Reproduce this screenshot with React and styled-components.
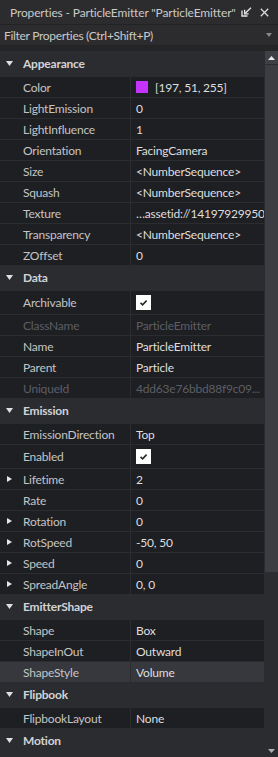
import React from "react";
import styled, { createGlobalStyle } from "styled-components";

const Global = createGlobalStyle`
  html, body { margin: 0; padding: 0; background: #2b2c30; }
  body { font-family: "Lato", "Open Sans", sans-serif; }
`;

const Panel = styled.div`
  width: 278px;
  height: 757px;
  overflow: hidden;
  display: flex;
  flex-direction: column;
  background: #2b2c30;
  font-family: "Lato", "Open Sans", sans-serif;
  font-size: 12px;
  letter-spacing: -0.2px;
`;

const TitleBar = styled.div`
  height: 24px;
  flex: none;
  display: flex;
  align-items: center;
  padding: 0 9px 0 10px;
  background: #2c2c2e;
  color: #c9c9c9;
  box-sizing: border-box;
  letter-spacing: -0.15px;
`;

const TitleText = styled.span`
  flex: 1;
  white-space: nowrap;
`;

const TitleIcons = styled.div`
  display: flex;
  align-items: center;
  gap: 8px;
`;

const FilterBar = styled.div`
  height: 20px;
  flex: none;
  display: flex;
  align-items: center;
  justify-content: space-between;
  padding: 0 6px 0 4px;
  background: #2c2c2e;
  border-top: 1px solid #232325;
  border-bottom: 1px solid #232325;
  color: #c9c9c9;
  letter-spacing: -0.3px;
`;

const Gap = styled.div`
  height: 5px;
  flex: none;
  background: #252527;
`;

const Body = styled.div`
  flex: 1;
  display: flex;
  min-height: 0;
`;

const List = styled.div`
  flex: 1;
  display: flex;
  flex-direction: column;
  background: #2b2c30;
`;

const Header = styled.div`
  height: 25px;
  flex: none;
  display: flex;
  align-items: center;
  padding-left: 6px;
  gap: 10px;
  color: #d2d3d6;
  font-weight: 700;
  background: #2b2c30;
`;

const Row = styled.div`
  flex: none;
  display: grid;
  grid-template-columns: 130px 1fr;
  column-gap: 1px;
  margin-top: 1px;
  height: ${(p) => (p.$tall ? 23 : 20)}px;
`;

const NameCell = styled.div`
  position: relative;
  display: flex;
  align-items: center;
  padding-left: 23px;
  background: ${(p) => (p.$sel ? "#36383e" : "#1e1f23")};
  color: ${(p) => (p.$dim ? "#5c5e65" : "#c4c4c4")};
  white-space: nowrap;
  overflow: hidden;
`;

const ValueCell = styled.div`
  display: flex;
  align-items: center;
  gap: 7px;
  padding-left: 5px;
  background: ${(p) => (p.$sel ? "#36383e" : "#1e1f23")};
  color: ${(p) => (p.$dim ? "#5c5e65" : "#dedede")};
  white-space: nowrap;
  overflow: hidden;
`;

const Expander = styled.span`
  position: absolute;
  left: 7px;
  top: 50%;
  margin-top: -3px;
  width: 0;
  height: 0;
  border-left: 5px solid #e6e6e6;
  border-top: 3px solid transparent;
  border-bottom: 3px solid transparent;
`;

const Swatch = styled.span`
  width: 12px;
  height: 12px;
  flex: none;
  background: ${(p) => p.$color};
`;

const Check = styled.span`
  width: 15px;
  height: 15px;
  flex: none;
  background: #ffffff;
  display: flex;
  align-items: center;
  justify-content: center;
`;

const Scrollbar = styled.div`
  width: 13px;
  flex: none;
  display: flex;
  flex-direction: column;
  background: #2b2c30;
  margin-left: 1px;
`;

const ScrollButton = styled.div`
  height: 13px;
  flex: none;
  display: flex;
  align-items: center;
  justify-content: center;
  background: ${(p) => (p.$up ? "#3f4045" : "#2b2c30")};
`;

const Thumb = styled.div`
  height: 507px;
  flex: none;
  margin-top: 1px;
  background: #3c3d42;
`;

const Track = styled.div`
  flex: 1;
`;

const Tri = ({ dir = "down", color = "#e0e0e0", w = 7, h = 5 }) => {
  const pts =
    dir === "down"
      ? `0,0 ${w},0 ${w / 2},${h}`
      : `0,${h} ${w},${h} ${w / 2},0`;
  return (
    <svg width={w} height={h} viewBox={`0 0 ${w} ${h}`}>
      <polygon points={pts} fill={color} />
    </svg>
  );
};

const CheckMark = () => (
  <svg width="11" height="11" viewBox="0 0 11 11">
    <path d="M2.5 5.8 L4.6 7.8 L8.6 3.6" fill="none" stroke="#2a2a2a" strokeWidth="1.6" />
  </svg>
);

const sections = [
  {
    title: "Appearance",
    rows: [
      { n: "Color", v: "[197, 51, 255]", color: "#c533ff" },
      { n: "LightEmission", v: "0" },
      { n: "LightInfluence", v: "1" },
      { n: "Orientation", v: "FacingCamera" },
      { n: "Size", v: "<NumberSequence>" },
      { n: "Squash", v: "<NumberSequence>" },
      { n: "Texture", v: "…assetid://14197929950" },
      { n: "Transparency", v: "<NumberSequence>" },
      { n: "ZOffset", v: "0" },
    ],
  },
  {
    title: "Data",
    rows: [
      { n: "Archivable", check: true },
      { n: "ClassName", v: "ParticleEmitter", dim: true },
      { n: "Name", v: "ParticleEmitter" },
      { n: "Parent", v: "Particle" },
      { n: "UniqueId", v: "4dd63e76bbd88f9c09...", dim: true },
    ],
  },
  {
    title: "Emission",
    rows: [
      { n: "EmissionDirection", v: "Top" },
      { n: "Enabled", check: true },
      { n: "Lifetime", v: "2", exp: true },
      { n: "Rate", v: "0" },
      { n: "Rotation", v: "0", exp: true },
      { n: "RotSpeed", v: "-50, 50", exp: true },
      { n: "Speed", v: "0", exp: true },
      { n: "SpreadAngle", v: "0, 0", exp: true },
    ],
  },
  {
    title: "EmitterShape",
    rows: [
      { n: "Shape", v: "Box" },
      { n: "ShapeInOut", v: "Outward" },
      { n: "ShapeStyle", v: "Volume", sel: true },
    ],
  },
  {
    title: "Flipbook",
    rows: [{ n: "FlipbookLayout", v: "None" }],
  },
  { title: "Motion", rows: [] },
];

export default function App() {
  return (
    <>
      <Global />
      <Panel>
        <TitleBar>
          <TitleText>Properties - ParticleEmitter "ParticleEmitter"</TitleText>
          <TitleIcons>
            <svg width="11" height="10" viewBox="0 0 11 10">
              <path d="M1 3.5 V9 H6.5" fill="none" stroke="#e8e8e8" strokeWidth="1.3" />
              <path d="M10 0.8 L4.2 6.2" fill="none" stroke="#e8e8e8" strokeWidth="1.3" />
              <path d="M3.6 2.8 V6.8 H7.6" fill="none" stroke="#e8e8e8" strokeWidth="1.3" />
            </svg>
            <svg width="9" height="9" viewBox="0 0 9 9">
              <path d="M0.8 0.8 L8.2 8.2 M8.2 0.8 L0.8 8.2" stroke="#d8d8d8" strokeWidth="1.3" />
            </svg>
          </TitleIcons>
        </TitleBar>
        <FilterBar>
          <span>Filter Properties (Ctrl+Shift+P)</span>
          <Tri color="#8a8a8a" w={6} h={4} />
        </FilterBar>
        <Gap />
        <Body>
          <List>
            {sections.map((s) => (
              <React.Fragment key={s.title}>
                <Header>
                  <Tri />
                  <span>{s.title}</span>
                </Header>
                {s.rows.map((r) => (
                  <Row key={r.n} $tall={r.check}>
                    <NameCell $dim={r.dim} $sel={r.sel}>
                      {r.exp && <Expander />}
                      {r.n}
                    </NameCell>
                    <ValueCell $dim={r.dim} $sel={r.sel}>
                      {r.color && <Swatch $color={r.color} />}
                      {r.check ? (
                        <Check>
                          <CheckMark />
                        </Check>
                      ) : (
                        r.v
                      )}
                    </ValueCell>
                  </Row>
                ))}
              </React.Fragment>
            ))}
          </List>
          <Scrollbar>
            <ScrollButton $up>
              <Tri dir="up" color="#e6e6e6" w={7} h={4} />
            </ScrollButton>
            <Thumb />
            <Track />
            <ScrollButton>
              <Tri color="#b0b0b0" w={7} h={4} />
            </ScrollButton>
          </Scrollbar>
        </Body>
      </Panel>
    </>
  );
}
